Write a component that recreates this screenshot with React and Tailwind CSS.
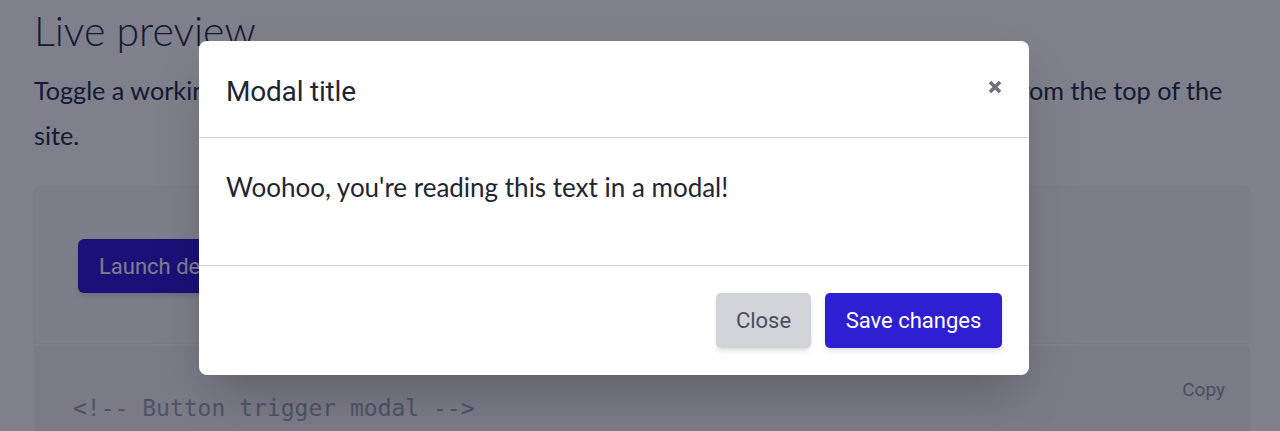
export default function App() {
  return (
    <div className="relative h-[431px] w-[1280px] overflow-hidden bg-white">
      {/* page underneath */}
      <div className="pl-[34px] pr-[30px] pt-[3px]">
        <h1 className="font-['Lato',sans-serif] text-[41px] font-light leading-[56px] text-[#2b3350]">
          Live preview
        </h1>
        <p className="mt-[9px] font-['Lato',sans-serif] text-[25.2px] leading-[45px] text-[#2b3350]">
          Toggle a working modal demo by clicking the button below. It will slide down and fade in from the top of the site.
        </p>
        <div className="mt-[28px] rounded-t-md border border-[#f4f4f6] bg-[#fafafb] pl-[43px] pt-[52px] pb-[50px]">
          <button className="h-[54px] rounded-[6px] bg-[#361ed9] px-[21px] font-['Roboto',sans-serif] text-[22px] text-[#fbfaff] shadow-md">
            Launch demo modal
          </button>
        </div>
        <div className="relative mt-[2px] h-[120px] rounded-b-md bg-[#f5f5f7] px-[39px] pt-[45px]">
          <span className="absolute right-[25px] top-[30px] font-['Roboto',sans-serif] text-[19px] text-[#959aa8]">
            Copy
          </span>
          <pre className="font-['DejaVu_Sans_Mono',monospace] text-[23px] text-[#a2a5b3]">
            {"<!-- Button trigger modal -->"}
          </pre>
        </div>
      </div>

      {/* backdrop */}
      <div className="absolute inset-0 bg-[#000117]/50"></div>

      {/* modal */}
      <div className="absolute left-[199px] top-[41px] w-[830px] rounded-[8px] bg-white shadow-2xl">
        <div className="flex h-[97px] items-center justify-between border-b border-[#d9dbe0] pl-[27px] pr-[27px]">
          <h5 className="mt-[5px] font-['Roboto',sans-serif] text-[28px] tracking-[-0.2px] text-[#1e2535]">
            Modal title
          </h5>
          <svg width="14" height="14" viewBox="0 0 14 14" className="mt-[-4px]">
            <path d="M2 2 L12 12 M12 2 L2 12" stroke="#6f707c" strokeWidth="3.6" strokeLinecap="butt" />
          </svg>
        </div>
        <div className="h-[128px] border-b border-[#d9dbe0] px-[27px] pt-[31px]">
          <p className="font-['Lato',sans-serif] text-[26px] leading-[36px] text-[#1e2535]">
            Woohoo, you're reading this text in a modal!
          </p>
        </div>
        <div className="flex h-[109px] items-center justify-end gap-[14px] pr-[27px] pb-[1px]">
          <button className="h-[55px] w-[95px] rounded-[5px] bg-[#d2d4da] font-['Roboto',sans-serif] text-[22px] text-[#4a4e5e] shadow-md">
            Close
          </button>
          <button className="h-[55px] w-[177px] rounded-[5px] bg-[#2e1fd3] font-['Roboto',sans-serif] text-[22px] text-white shadow-md">
            Save changes
          </button>
        </div>
      </div>
    </div>
  );
}
